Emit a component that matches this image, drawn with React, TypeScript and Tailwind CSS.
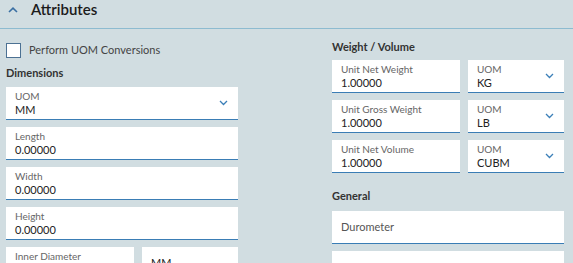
import React from "react";

const Chevron = () => (
  <svg width="9" height="6" viewBox="0 0 9 6" className="shrink-0">
    <path d="M1 1 L4.5 4.5 L8 1" fill="none" stroke="#3b7fb8" strokeWidth="1.3" />
  </svg>
);

function Field({ label, value, w, select }: { label: string; value: string; w: string; select?: boolean }) {
  return (
    <div className={`${w} h-[33px] bg-white border-b border-[#3a7db5] flex items-center pl-[9px] pr-[10px]`}>
      <div className="flex-1 flex flex-col pt-[1px]">
        <div className="text-[10px] leading-[13px] text-[#666]">{label}</div>
        <div className="text-[11px] leading-[14px] h-[14px] text-[#222]">{value}</div>
      </div>
      {select && <Chevron />}
    </div>
  );
}

export default function App() {
  return (
    <div className="w-[573px] h-[263px] overflow-hidden bg-[#d1dde1]" style={{ fontFamily: "Lato, 'Open Sans', sans-serif" }}>
      <div className="h-[29px] border-b border-[#8dbbd0] flex items-start">
        <svg width="10" height="6" viewBox="0 0 10 6" className="ml-[8px] mt-[7px]">
          <path d="M1 5 L5 1.2 L9 5" fill="none" stroke="#3a6fa3" strokeWidth="1.6" />
        </svg>
        <span className="ml-[13px] text-[15px] leading-[18px] font-semibold text-[#1b1b1b]">Attributes</span>
      </div>
      <div className="flex pl-[6px] pt-[12px]">
        <div className="w-[232px] flex flex-col">
          <div className="flex items-center h-[16px] mt-[1px]">
            <div className="w-[15px] h-[15px] bg-white border border-[#4c7193]" />
            <span className="ml-[8px] text-[11px] text-[#444]">Perform UOM Conversions</span>
          </div>
          <div className="mt-[8px] text-[11px] leading-[14px] font-bold text-[#333]">Dimensions</div>
          <div className="mt-[7px] flex flex-col gap-[7px]">
            <Field label="UOM" value="MM" w="w-[232px]" select />
            <Field label="Length" value="0.00000" w="w-[232px]" />
            <Field label="Width" value="0.00000" w="w-[232px]" />
            <Field label="Height" value="0.00000" w="w-[232px]" />
            <div className="flex gap-[8px]">
              <Field label="Inner Diameter" value="" w="w-[128px]" />
              <div className="w-[96px] h-[33px] bg-white border-b border-[#3a7db5] flex items-start pl-[9px] pt-[9px] text-[11px] leading-[14px] text-[#222]">MM</div>
            </div>
          </div>
        </div>
        <div className="ml-[94px] w-[232px] flex flex-col">
          <div className="text-[11px] leading-[14px] font-bold text-[#333] mt-[-1px]">Weight / Volume</div>
          <div className="mt-[6px] flex flex-col gap-[7px]">
            <div className="flex gap-[8px]">
              <Field label="Unit Net Weight" value="1.00000" w="w-[128px]" />
              <Field label="UOM" value="KG" w="w-[96px]" select />
            </div>
            <div className="flex gap-[8px]">
              <Field label="Unit Gross Weight" value="1.00000" w="w-[128px]" />
              <Field label="UOM" value="LB" w="w-[96px]" select />
            </div>
            <div className="flex gap-[8px]">
              <Field label="Unit Net Volume" value="1.00000" w="w-[128px]" />
              <Field label="UOM" value="CUBM" w="w-[96px]" select />
            </div>
          </div>
          <div className="mt-[16px] text-[11px] leading-[14px] font-bold text-[#333]">General</div>
          <div className="mt-[8px] flex flex-col gap-[7px]">
            <div className="w-[232px] h-[33px] bg-white border-b border-[#3a7db5] flex items-center pl-[9px] text-[11px] text-[#555]">Durometer</div>
            <div className="w-[232px] h-[33px] bg-white border-b border-[#3a7db5]" />
          </div>
        </div>
      </div>
    </div>
  );
}
